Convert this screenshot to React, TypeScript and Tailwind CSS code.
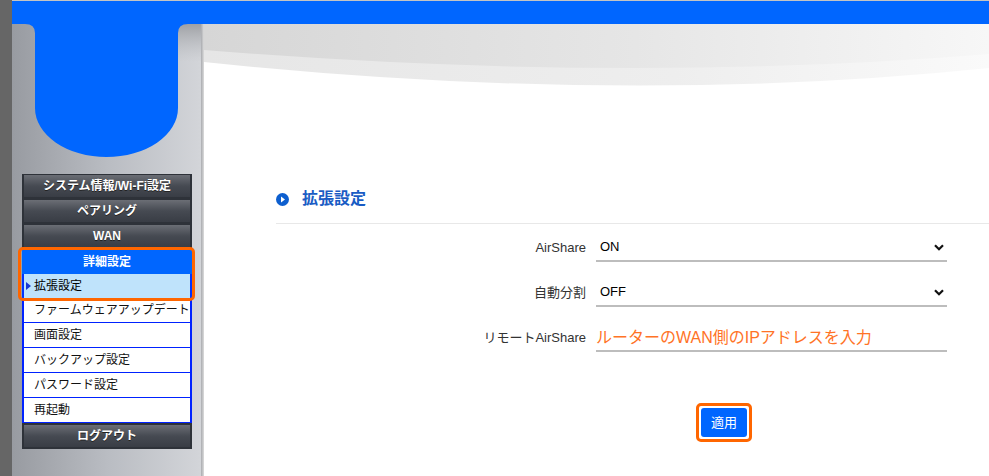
import React from 'react';

const jp = { fontFamily: '"Liberation Sans", "Noto Sans CJK JP", sans-serif' };

const darkButton =
  'h-[22px] mx-[2px] flex items-center justify-center text-white font-bold text-[12px] bg-gradient-to-b from-[#6b6e75] via-[#464a52] to-[#393d45] [text-shadow:0_1px_0_#222]';

const subItems = ['ファームウェアアップデート', '画面設定', 'バックアップ設定', 'パスワード設定', '再起動'];

function Chevron() {
  return (
    <svg width="10" height="7" viewBox="0 0 10 7" className="shrink-0">
      <path d="M1 1.2 L5 5.2 L9 1.2" fill="none" stroke="#111" strokeWidth="2.2" />
    </svg>
  );
}

function SideMenu() {
  return (
    <div className="w-[170px] bg-[#2e3239] pt-[1px] pb-[2px] flex flex-col" style={jp}>
      <div className={darkButton}>システム情報/Wi-Fi設定</div>
      <div className="h-[3px]" />
      <div className={darkButton}>ペアリング</div>
      <div className="h-[3px]" />
      <div className={darkButton}>WAN</div>
      <div className="h-[3px]" />
      <div className="relative">
        <div className="h-[24px] bg-[#0066ff] flex items-center justify-center text-white font-bold text-[12px]">
          詳細設定
        </div>
        <div className="h-[24px] bg-[#bfe3fb] border-x-2 border-[#0033ff] flex items-center pl-[2px] text-[12px] text-black">
          <span className="w-0 h-0 border-y-[4px] border-y-transparent border-l-[5px] border-l-[#1538d6] mr-[3px]" />
          拡張設定
        </div>
        <div className="absolute -left-[4px] -right-[3px] -top-[3px] -bottom-[3px] border-[3px] border-[#ff6600] rounded-[5px] pointer-events-none" />
      </div>
      <div className="bg-white border-x-2 border-[#0022ff]">
        {subItems.map((s) => (
          <div
            key={s}
            className="h-[25px] border-b border-[#0022ff] flex items-center pl-[10px] text-[12px] text-[#111] whitespace-nowrap overflow-hidden"
          >
            {s}
          </div>
        ))}
      </div>
      <div className="h-[2px]" />
      <div className={darkButton}>ログアウト</div>
    </div>
  );
}

function Sidebar() {
  return (
    <div className="w-[189px] shrink-0 flex flex-col bg-gradient-to-r from-[#989ba1] via-[#b9bcc2] to-[#d3d5d9]">
      <svg width="189" height="134" viewBox="0 0 189 134" className="block">
        <defs>
          <linearGradient id="sideTop" x1="0" y1="0" x2="0" y2="1">
            <stop offset="0" stopColor="#9fa1a5" />
            <stop offset="1" stopColor="#b9bcc1" stopOpacity="0" />
          </linearGradient>
        </defs>
        <rect x="166" y="0" width="23" height="38" fill="url(#sideTop)" />
        <path
          d="M13 0 Q23 0 23 9 V84 A71.5 49 0 0 0 166 84 V9 Q166 0 176 0 Z"
          fill="#0066ff"
        />
      </svg>
      <div className="pt-[16px] pl-[10px]">
        <SideMenu />
      </div>
    </div>
  );
}

function HeaderShade() {
  return (
    <svg width="785" height="75" viewBox="0 0 785 75" className="block" preserveAspectRatio="none">
      <defs>
        <linearGradient id="fadeX" x1="0" y1="0" x2="1" y2="0">
          <stop offset="0" stopColor="#d6d6d6" />
          <stop offset="0.55" stopColor="#e6e6e6" />
          <stop offset="1" stopColor="#f7f7f7" />
        </linearGradient>
        <linearGradient id="fadeX2" x1="0" y1="0" x2="1" y2="0">
          <stop offset="0" stopColor="#e6e6e6" />
          <stop offset="0.6" stopColor="#eeeeee" />
          <stop offset="1" stopColor="#fafafa" />
        </linearGradient>
      </defs>
      <path d="M0 0 H785 V44 Q420 82 0 38 Z" fill="url(#fadeX2)" />
      <path d="M0 0 H785 V30 Q420 60 0 26 Z" fill="url(#fadeX)" />
    </svg>
  );
}

function FormRow({ label, children }: { label: string; children: React.ReactNode }) {
  return (
    <div className="flex items-end">
      <div className="w-[320px] text-right text-[13px] text-[#333] pr-[10px] h-[28px] flex items-center justify-end">
        {label}
      </div>
      {children}
    </div>
  );
}

function Content() {
  return (
    <div className="flex-1 flex flex-col bg-white" style={jp}>
      <HeaderShade />
      <div className="pl-[72px] pt-[89px]">
        <div className="flex items-center h-[22px] gap-[13px]">
          <svg width="13" height="13" viewBox="0 0 13 13" className="shrink-0">
            <circle cx="6.5" cy="6.5" r="6.5" fill="#0d5fcf" />
            <path d="M5 3.6 L9 6.5 L5 9.4 Z" fill="#fff" />
          </svg>
          <span className="text-[16px] font-bold text-[#1a5cc4] leading-[22px]">拡張設定</span>
        </div>
        <div className="mt-[13px] border-b border-[#e8e8e8]" />
        <div className="mt-[10px] flex flex-col gap-[17px]">
          <FormRow label="AirShare">
            <div className="w-[351px] h-[28px] border-b-2 border-[#bdbdbd] flex items-center justify-between pl-[4px] pr-[3px] text-[13px] text-black">
              <span>ON</span>
              <Chevron />
            </div>
          </FormRow>
          <FormRow label="自動分割">
            <div className="w-[351px] h-[28px] border-b-2 border-[#bdbdbd] flex items-center justify-between pl-[4px] pr-[3px] text-[13px] text-black">
              <span>OFF</span>
              <Chevron />
            </div>
          </FormRow>
          <FormRow label="リモートAirShare">
            <div className="w-[351px] h-[28px] border-b-2 border-[#bdbdbd] flex items-center pt-[2px] text-[16px] text-[#ff7326] whitespace-nowrap">
              ルーターのWAN側のIPアドレスを入力
            </div>
          </FormRow>
        </div>
        <div className="mt-[51px] pl-[420px]">
          <div className="inline-flex border-[3px] border-[#ff6600] rounded-[5px] p-[2px]">
            <div className="w-[46px] h-[29px] rounded-[3px] bg-[#0066ff] text-white text-[13px] flex items-center justify-center">
              適用
            </div>
          </div>
        </div>
      </div>
    </div>
  );
}

export default function App() {
  return (
    <div className="w-[989px] h-[476px] overflow-hidden flex bg-white">
      <div className="w-[12px] shrink-0 bg-[#666666]" />
      <div className="flex-1 flex flex-col">
        <div className="h-[1px] bg-[#c4c4c4]" />
        <div className="h-[23px] bg-[#0066ff]" />
        <div className="flex-1 flex">
          <Sidebar />
          <div className="w-[3px] shrink-0 bg-gradient-to-r from-[#a9abaf] to-[#dcdcdc]" />
          <Content />
        </div>
      </div>
    </div>
  );
}
